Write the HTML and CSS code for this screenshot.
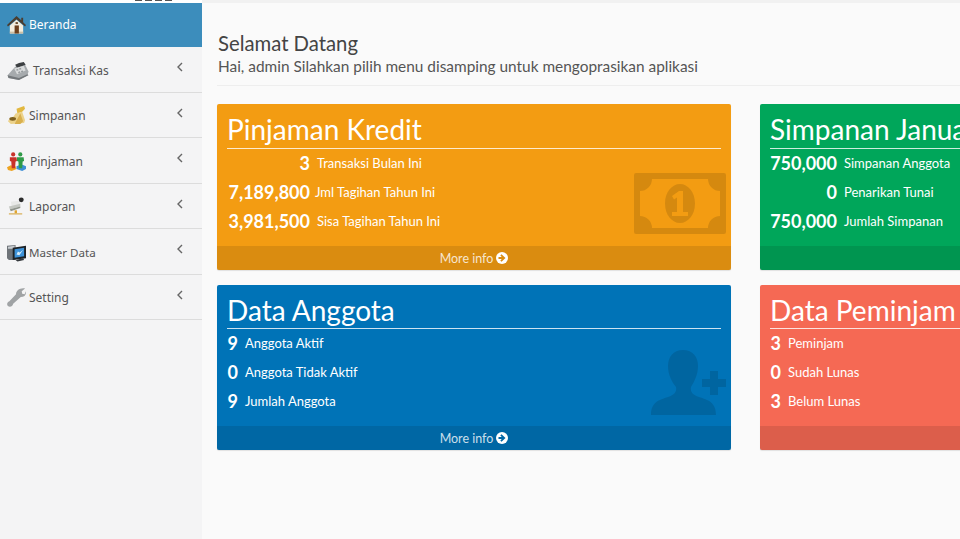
FILE: index.html
```html
<!DOCTYPE html>
<html lang="en">
<head>
  <meta charset="UTF-8">
  <meta name="viewport" content="width=device-width, initial-scale=1.0">
  <link rel="stylesheet" href="styles.css">
  <title>Selamat Datang</title>
</head>
<body>
  <!-- Top strip, the rest of the header is scrolled away -->
  <div class="topbar">
    <div class="topbar-left"><span class="cut"></span><span class="cut"></span><span class="cut"></span><span class="cut"></span></div>
    <div class="topbar-right"></div>
  </div>

  <div class="page">
    <!-- Sidebar -->
    <aside class="sidebar">
      <a class="menu-item active">
        <svg class="menu-icon" viewBox="0 0 20 20"><path d="M10 1 0 10.500l1 1.500L10 4.500 19 12l1-1.500-3-3V3h-2v2.500z" fill="#4a3d30"/><path d="M3 11 10 5l7 6v8.500H3z" fill="#f4eddd"/><path d="M3 17.500h14v2H3z" fill="#cdbfa5"/><rect x="8" y="11" width="4.500" height="8.500" fill="#6b3f1d"/><rect x="9" y="7.500" width="2.500" height="2" fill="#6b4a2a"/></svg>
        <span>Beranda</span>
      </a>
      <a class="menu-item">
        <svg class="menu-icon wide" viewBox="0 0 23 20"><path d="M8 6 18 3l4 8-1 4-9 5-11-2-1-3z" fill="#a6aaad"/><path d="M12 2l5-1 2 3-9 3-2-3z" fill="#3c3f42"/><path d="M7 8l10-3 2 5-9 4z" fill="#d9dbdc"/><path d="M9 9l2-.6.6 1.300-2 .6zM12 8l2-.6.6 1.300-2 .6zM11 11.500l2-.6.6 1.300-2 .6zM14 10.500l2-.6.6 1.300-2 .6z" fill="#93979a"/><path d="M0 15l12 3 9-4 1 1-10 5-11-2z" fill="#74787b"/></svg>
        <span>Transaksi Kas</span>
        <svg class="chev" viewBox="0 0 6 10"><path d="M5 1 1 5l4 4" fill="none" stroke="#666" stroke-width="1.400"/></svg>
      </a>
      <a class="menu-item">
        <svg class="menu-icon" viewBox="0 0 20 20"><path d="M10 3l8-3 1 3-3 3-5 2z" fill="#e2b840"/><path d="M9 8l7-2 3 9-1 3-14 1-3-3 2-3 4-2z" fill="#ecd28a"/><ellipse cx="6" cy="13.500" rx="3.500" ry="2" fill="#7d5f1e"/><path d="M14 8l3 8-3 3H8z" fill="#d9b04e"/></svg>
        <span>Simpanan</span>
        <svg class="chev" viewBox="0 0 6 10"><path d="M5 1 1 5l4 4" fill="none" stroke="#666" stroke-width="1.400"/></svg>
      </a>
      <a class="menu-item">
        <svg class="menu-icon" viewBox="0 0 20 20"><path d="M0 16l4-2 5 1 1 3-5 2-4-1z" fill="#eda322"/><path d="M10 15l5-2 5 2v3l-4 2-6-2z" fill="#3d8fd6"/><circle cx="6.500" cy="2.500" r="2.200" fill="#c8322a"/><path d="M3 5.500h7l.5 4-1.500.5-.5 7H5l-.5-7L3 9.500z" fill="#c8322a"/><circle cx="14" cy="2.500" r="2.200" fill="#2f9a48"/><path d="M10.500 5.500h7l.5 4-1.500.5-.5 7h-3.500l-.5-7-1.500-.5z" fill="#2f9a48"/></svg>
        <span class="shift">Pinjaman</span>
        <svg class="chev" viewBox="0 0 6 10"><path d="M5 1 1 5l4 4" fill="none" stroke="#666" stroke-width="1.400"/></svg>
      </a>
      <a class="menu-item">
        <svg class="menu-icon" viewBox="0 0 20 20"><circle cx="15" cy="3" r="2.600" fill="#2c2c2c"/><path d="M4 5l8-1 2 4-9 2z" fill="#e8e9e7"/><path d="M2 10l12-3v3L3 13z" fill="#c4c7c1"/><path d="M3 13l11-3v1.500L4 15z" fill="#8f948b"/><rect x="8" y="14" width="2.500" height="3.500" fill="#e0a52e"/><rect x="2" y="17" width="14" height="1.500" fill="#dcb96e"/></svg>
        <span>Laporan</span>
        <svg class="chev" viewBox="0 0 6 10"><path d="M5 1 1 5l4 4" fill="none" stroke="#666" stroke-width="1.400"/></svg>
      </a>
      <a class="menu-item">
        <svg class="menu-icon" viewBox="0 0 20 20"><path d="M0 3l9-1v16H2l-2-2z" fill="#6e7378"/><path d="M1 4l7-1v3H1z" fill="#c9cdd1"/><path d="M6 5l14-2v13L6 18z" fill="#1d2226"/><path d="M8 6.500l10-1.500v9L8 15.500z" fill="#3d92d8"/><path d="M10 12l3 1 4-6-3.500 3-2-1z" fill="#d5ecfa"/><path d="M9 18l8-2 1 2-7 1.500z" fill="#34383c"/></svg>
        <span class="tight">Master Data</span>
        <svg class="chev" viewBox="0 0 6 10"><path d="M5 1 1 5l4 4" fill="none" stroke="#666" stroke-width="1.400"/></svg>
      </a>
      <a class="menu-item">
        <svg class="menu-icon" viewBox="0 0 20 20"><path d="M19 .5l-3.500 3 .5 2.500 2.500.5 1.500-3c.3 3.500-1.500 6-5.500 6L6.500 16.500c-.5 3-3.500 4-5.500 2.500-1.500-1.500-1-4 1.500-5l7-7.500C9.500 3 13.500-.5 19 .5z" fill="#a0a3a5"/></svg>
        <span>Setting</span>
        <svg class="chev" viewBox="0 0 6 10"><path d="M5 1 1 5l4 4" fill="none" stroke="#666" stroke-width="1.400"/></svg>
      </a>
    </aside>

    <!-- Content -->
    <main class="content">
      <section class="intro">
        <h1>Selamat Datang</h1>
        <p>Hai, admin Silahkan pilih menu disamping untuk mengoprasikan aplikasi</p>
      </section>

      <div class="cards">
        <div class="card orange">
          <div class="card-body">
            <h2>Pinjaman Kredit</h2>
            <div class="stats col-wide">
              <b>3</b><span>Transaksi Bulan Ini</span>
              <b>7,189,800</b><span class="nudge">Jml Tagihan Tahun Ini</span>
              <b>3,981,500</b><span>Sisa Tagihan Tahun Ini</span>
            </div>
          </div>
          <svg class="card-icon money" viewBox="0 0 92 61"><path fill-rule="evenodd" d="M2 0h88a2 2 0 0 1 2 2v57a2 2 0 0 1-2 2H2a2 2 0 0 1-2-2V2a2 2 0 0 1 2-2zM18 6a12 12 0 0 1-12 12v25a12 12 0 0 1 12 12h56a12 12 0 0 1 12-12V18A12 12 0 0 1 74 6zM46 11c8 0 15 8 15 19.500S54 50 46 50s-15-8-15-19.500S38 11 46 11z"/><path fill="#f39c12" d="M38 43h16v-4h-5V18h-4l-7 5 2 3.500 3-2V39h-5z"/></svg>
          <a class="card-footer">More info
            <svg class="arrow" viewBox="0 0 12 12"><circle cx="6" cy="6" r="6" fill="#fff"/><path d="M2.500 5h3.300L4.300 3.400 5.500 2.300 9.500 6l-4 3.700-1.200-1.100L5.800 7H2.500z" class="arrow-in"/></svg>
          </a>
        </div>

        <div class="card green">
          <div class="card-body">
            <h2>Simpanan Januari</h2>
            <div class="stats col-mid">
              <b>750,000</b><span>Simpanan Anggota</span>
              <b>0</b><span>Penarikan Tunai</span>
              <b>750,000</b><span>Jumlah Simpanan</span>
            </div>
          </div>
          <a class="card-footer"></a>
        </div>

        <div class="card blue">
          <div class="card-body">
            <h2>Data Anggota</h2>
            <div class="stats col-small">
              <b>9</b><span>Anggota Aktif</span>
              <b>0</b><span>Anggota Tidak Aktif</span>
              <b>9</b><span>Jumlah Anggota</span>
            </div>
          </div>
          <svg class="card-icon user" viewBox="0 0 75 65"><path d="M32 0c10 0 15 7 15 16 0 9-4 16-7 21-1 5 2 8 8 10 9 3 17 5 17 18H0c0-13 8-15 17-18 6-2 9-5 8-10-4-5-8-12-8-21C17 7 22 0 32 0z"/><path d="M59 21h8v8h8v8h-8v8h-8v-8h-8v-8h8z"/></svg>
          <a class="card-footer">More info
            <svg class="arrow" viewBox="0 0 12 12"><circle cx="6" cy="6" r="6" fill="#fff"/><path d="M2.500 5h3.300L4.300 3.400 5.500 2.300 9.500 6l-4 3.700-1.200-1.100L5.800 7H2.500z" class="arrow-in"/></svg>
          </a>
        </div>

        <div class="card red">
          <div class="card-body">
            <h2>Data Peminjam</h2>
            <div class="stats col-small">
              <b>3</b><span>Peminjam</span>
              <b>0</b><span>Sudah Lunas</span>
              <b>3</b><span>Belum Lunas</span>
            </div>
          </div>
          <a class="card-footer"></a>
        </div>
      </div>
    </main>
  </div>
</body>
</html>
```

FILE: styles.css
```css
/* General Styles */
body {
  margin: 0;
  height: 539px;
  overflow: hidden;
  font-family: Lato, "Noto Sans", sans-serif;
  background: #fafafa;
}

.topbar {
  display: flex;
  height: 3px;
  background: #fff;
}

.topbar-left {
  display: flex;
  gap: 3px;
  width: 202px;
  height: 1px;
  padding-left: 135px;
  box-sizing: border-box;
}

.cut {
  width: 7px;
  height: 1px;
  background: #555;
}

.topbar-right {
  flex: 1;
  background: #f1f1f1;
}

.page {
  display: flex;
  height: 536px;
}

/* Sidebar */
.sidebar {
  width: 202px;
  flex-shrink: 0;
  background: #f4f4f5;
}

.menu-item {
  display: flex;
  align-items: center;
  gap: 3px;
  box-sizing: border-box;
  height: 45.500px;
  padding: 2px 19px 0 7px;
  border-bottom: 1px solid #dcdcdc;
  font-family: "Noto Sans", sans-serif;
  font-size: 12px;
  color: #555;
}

.menu-item.active {
  height: 44px;
  padding: 0 19px 2px 7px;
  border-bottom: 0;
  background: #3c8dbc;
  color: #fff;
}

.menu-icon {
  width: 19px;
  height: 19px;
  flex-shrink: 0;
}

.menu-icon.wide {
  width: 23px;
}

.shift {
  margin-left: 1px;
}

.tight {
  font-size: 11.600px;
}

.chev {
  width: 6px;
  height: 10px;
  margin-left: auto;
  margin-top: -6px;
}

/* Content */
.content {
  flex: 1;
  min-width: 0;
  padding: 0 0 0 15px;
  overflow: hidden;
}

.intro {
  padding: 29px 0 7px 1px;
  border-bottom: 1px solid #eee;
  margin-bottom: 18px;
  color: #444;
}

.intro h1 {
  margin: 0;
  font-size: 20.300px;
  font-weight: 400;
  line-height: 23px;
}

.intro p {
  margin: 0;
  font-size: 15.400px;
  line-height: 23px;
  color: #555;
}

.cards {
  display: grid;
  grid-template-columns: 514px 514px;
  column-gap: 29px;
  row-gap: 15px;
}

/* Cards */
.card {
  position: relative;
  display: flex;
  flex-direction: column;
  height: 166px;
  border-radius: 2px;
  color: #fff;
  box-shadow: 0 1px 1px rgba(0, 0, 0, 0.1);
}

.card:nth-child(n+3) {
  height: 165px;
}

.card-body {
  flex: 1;
  min-height: 0;
  padding: 8px 10px 0;
}

.card h2 {
  margin: 0 0 -1px;
  height: 36px;
  font-size: 28px;
  font-weight: 400;
  line-height: 34px;
  white-space: nowrap;
  border-bottom: 1px solid rgba(255, 255, 255, 0.8);
}

.card:nth-child(n+3) h2 {
  height: 35px;
}

.stats {
  display: grid;
  column-gap: 7px;
  grid-auto-rows: 29px;
  align-items: center;
  font-size: 13px;
}

.stats b {
  font-size: 18px;
  text-align: right;
}

.col-wide { grid-template-columns: 83px 1fr; }
.col-mid { grid-template-columns: 67px 1fr; }
.col-small { grid-template-columns: 11px 1fr; }

.nudge {
  margin-left: -2px;
}

.card-footer {
  display: flex;
  align-items: center;
  justify-content: center;
  gap: 3px;
  flex-shrink: 0;
  height: 24px;
  font-size: 12.500px;
  color: rgba(255, 255, 255, 0.8);
  background: rgba(0, 0, 0, 0.1);
}

.arrow {
  width: 12px;
  height: 12px;
}

.card-icon {
  position: absolute;
  fill: rgba(0, 0, 0, 0.12);
}

.money {
  right: 5px;
  top: 69px;
  width: 92px;
  height: 61px;
}

.user {
  right: 5px;
  top: 65px;
  width: 75px;
  height: 65px;
}

.orange { background: #f39c12; }
.green { background: #00a65a; }
.blue { background: #0073b7; }
.red { background: #f56954; }

.orange .arrow-in { fill: #db8d10; }
.blue .arrow-in { fill: #0067a5; }
```
